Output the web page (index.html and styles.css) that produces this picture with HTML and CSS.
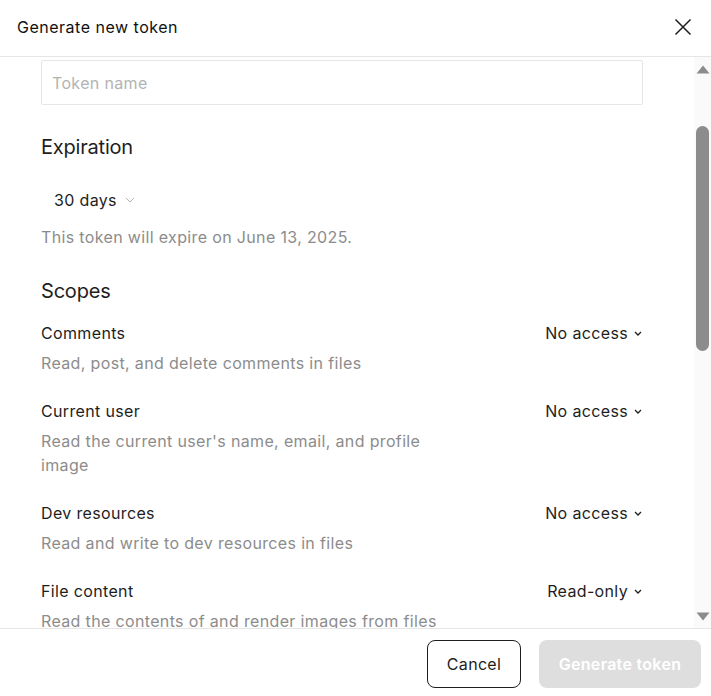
FILE: index.html
```html
<!DOCTYPE html>
<html lang="en">
<head>
<meta charset="utf-8">
<title>Generate new token</title>
<link rel="stylesheet" href="styles.css">
</head>
<body>
<div class="modal">
  <header class="header">
    <h1 class="title">Generate new token</h1>
    <button class="close" aria-label="Close">
      <svg width="18" height="18" viewBox="0 0 18 18"><path d="M1.5 1.5 L16.5 16.5 M16.5 1.5 L1.5 16.5" stroke="#1e1e1e" stroke-width="1.5" fill="none"/></svg>
    </button>
  </header>
  <div class="body">
    <div class="content">
      <div class="input">Token name</div>
      <h2 class="section">Expiration</h2>
      <div class="expiry-select">30 days
        <svg class="chev-light" width="10" height="6" viewBox="0 0 10 6"><path d="M1 1 L5 5 L9 1" stroke="#b3b3b3" stroke-width="1" fill="none"/></svg>
      </div>
      <p class="note">This token will expire on June 13, 2025.</p>
      <h2 class="section scopes-head">Scopes</h2>
      <div class="scope">
        <div class="scope-top"><span class="scope-name">Comments</span><span class="access">No access <svg width="8" height="5" viewBox="0 0 8 5"><path d="M1 1 L4 4 L7 1" stroke="#1e1e1e" stroke-width="1.3" fill="none"/></svg></span></div>
        <p class="scope-desc">Read, post, and delete comments in files</p>
      </div>
      <div class="scope">
        <div class="scope-top"><span class="scope-name">Current user</span><span class="access">No access <svg width="8" height="5" viewBox="0 0 8 5"><path d="M1 1 L4 4 L7 1" stroke="#1e1e1e" stroke-width="1.3" fill="none"/></svg></span></div>
        <p class="scope-desc">Read the current user's name, email, and profile image</p>
      </div>
      <div class="scope">
        <div class="scope-top"><span class="scope-name">Dev resources</span><span class="access">No access <svg width="8" height="5" viewBox="0 0 8 5"><path d="M1 1 L4 4 L7 1" stroke="#1e1e1e" stroke-width="1.3" fill="none"/></svg></span></div>
        <p class="scope-desc">Read and write to dev resources in files</p>
      </div>
      <div class="scope">
        <div class="scope-top"><span class="scope-name">File content</span><span class="access">Read-only <svg width="8" height="5" viewBox="0 0 8 5"><path d="M1 1 L4 4 L7 1" stroke="#1e1e1e" stroke-width="1.3" fill="none"/></svg></span></div>
        <p class="scope-desc">Read the contents of and render images from files</p>
      </div>
    </div>
    <div class="scrollbar">
      <svg class="arrow" width="14" height="9" viewBox="0 0 14 9"><path d="M7 0.5 L13.5 8.5 L0.5 8.5 Z" fill="#8c8c8c"/></svg>
      <div class="thumb"></div>
      <div class="track-fill"></div>
      <svg class="arrow" width="14" height="9" viewBox="0 0 14 9"><path d="M0.5 0.5 L13.5 0.5 L7 8.5 Z" fill="#8c8c8c"/></svg>
    </div>
  </div>
  <footer class="footer">
    <button class="btn btn-cancel">Cancel</button>
    <button class="btn btn-primary" disabled>Generate token</button>
  </footer>
</div>
</body>
</html>
```

FILE: styles.css
```css
* { box-sizing: border-box; }

html, body {
  margin: 0;
  padding: 0;
  background: #ffffff;
}

body {
  width: 711px;
  height: 696px;
  overflow: hidden;
  font-family: Inter, "Noto Sans", sans-serif;
  color: #1e1e1e;
  font-size: 16px;
  letter-spacing: 0.35px;
}

.modal {
  display: flex;
  flex-direction: column;
  height: 696px;
}

.header {
  height: 57px;
  flex: none;
  display: flex;
  align-items: center;
  justify-content: space-between;
  padding: 0 19px 2px 17px;
  border-bottom: 1px solid #e6e6e6;
}

.title {
  margin: 0;
  font-size: 16px;
  font-weight: 400;
  line-height: 24px;
  letter-spacing: 0.5px;
  color: #111111;
}

.close {
  border: 0;
  background: none;
  padding: 0;
  width: 18px;
  height: 18px;
  display: flex;
}

.body {
  flex: 1;
  display: flex;
  min-height: 0;
  overflow: hidden;
}

.content {
  flex: 1;
  padding: 3px 51px 0 41px;
  overflow: hidden;
}

.input {
  height: 45px;
  border: 1px solid #e6e6e6;
  border-radius: 2px;
  padding: 0 10px;
  display: flex;
  align-items: center;
  color: #b3b3b3;
  font-size: 16px;
}

.section {
  margin: 28px 0 0;
  font-size: 20px;
  font-weight: 400;
  line-height: 28px;
  letter-spacing: -0.2px;
  color: #1e1e1e;
}

.expiry-select {
  margin-top: 27px;
  padding-left: 13px;
  line-height: 24px;
  display: flex;
  align-items: center;
  gap: 8px;
}

.note {
  margin: 13px 0 0;
  line-height: 24px;
  color: #8c8c8c;
}

.scopes-head {
  margin-top: 28px;
  margin-bottom: 16px;
}

.scope {
  margin-bottom: 24px;
}

.scope-top {
  display: flex;
  justify-content: space-between;
  align-items: center;
  line-height: 24px;
  margin-bottom: 6px;
}

.access {
  display: flex;
  align-items: center;
  gap: 6px;
  padding-right: 1px;
}

.scope-desc {
  margin: 0;
  line-height: 24px;
  color: #8c8c8c;
  max-width: 412px;
}

.scrollbar {
  width: 17px;
  flex: none;
  background: #fafafa;
  display: flex;
  flex-direction: column;
  align-items: center;
  padding: 8px 0 7px;
}

.arrow {
  flex: none;
}

.thumb {
  margin-top: 52px;
  width: 13px;
  height: 225px;
  border-radius: 7px;
  background: #8c8c8c;
  flex: none;
}

.track-fill {
  flex: 1;
}

.footer {
  height: 68px;
  flex: none;
  border-top: 1px solid #e6e6e6;
  display: flex;
  justify-content: flex-end;
  align-items: flex-start;
  gap: 18px;
  padding: 11px 10px 0 0;
}

.btn {
  height: 48px;
  border-radius: 8px;
  font-family: Inter, "Noto Sans", sans-serif;
  font-size: 16px;
  letter-spacing: 0.3px;
  padding: 0;
}

.btn-cancel {
  width: 94px;
  border: 1px solid #1e1e1e;
  background: #ffffff;
  color: #1e1e1e;
}

.btn-primary {
  width: 162px;
  border: 0;
  background: #dedede;
  color: #ffffff;
  font-weight: 600;
}
```
